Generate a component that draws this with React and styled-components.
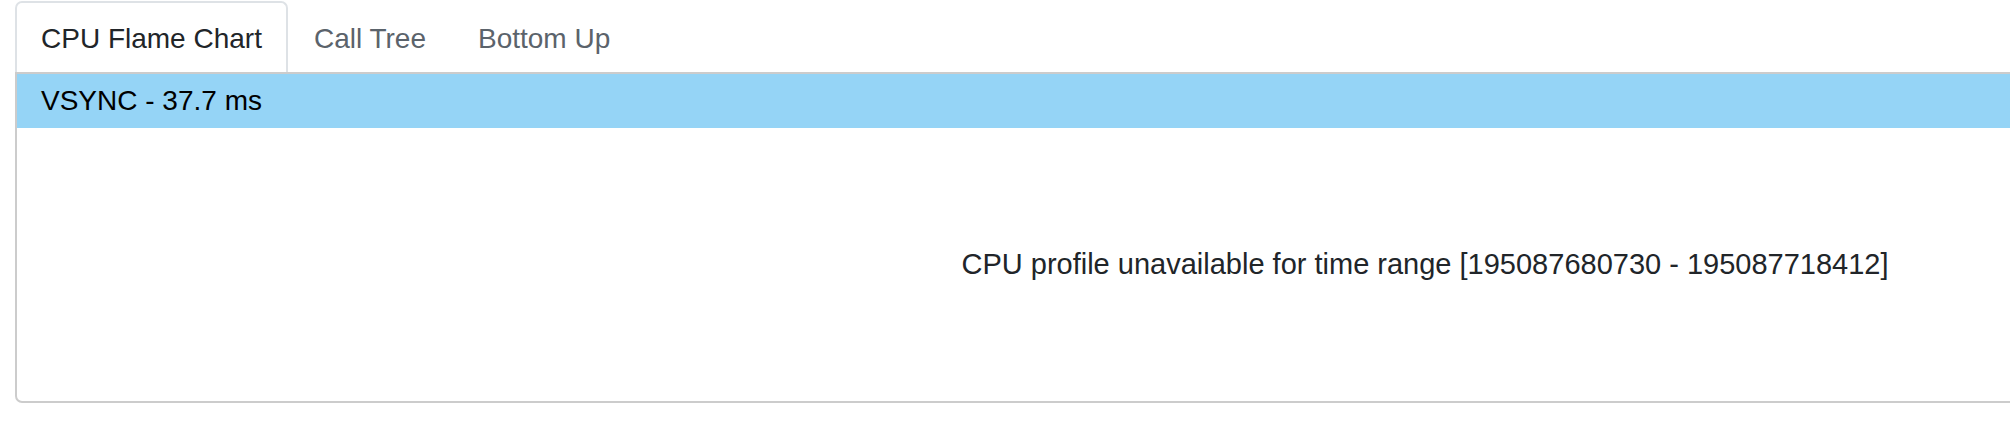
import React, { useState } from 'react'
import styled, { createGlobalStyle } from 'styled-components'

const GlobalStyle = createGlobalStyle`
    html, body {
        margin: 0;
        background: #ffffff;
        overflow: hidden;
    }
    body {
        font-family: "Liberation Sans", Arial, sans-serif;
        color: #212529;
    }
`

const Wrapper = styled.div`
    padding: 1px 0 0 15px;
    width: 2820px;
`

const TabList = styled.div`
    display: flex;
    flex-direction: row;
    align-items: flex-end;
`

const Tab = styled.button`
    font-family: inherit;
    font-size: 28px;
    line-height: 44px;
    padding: 14px 24px 11px;
    margin: 0;
    background: #ffffff;
    cursor: pointer;
    border: 2px solid ${p => (p.$active ? '#dee2e6' : 'transparent')};
    border-bottom: none;
    border-radius: 7px 7px 0 0;
    color: ${p => (p.$active ? '#212529' : '#5b636b')};
`

const Panel = styled.div`
    border: 2px solid #cccccc;
    border-radius: 0 0 7px 7px;
    display: flex;
    flex-direction: column;
    height: 327px;
`

const Band = styled.div`
    background: #95d4f6;
    color: #000000;
    font-size: 28px;
    height: 54px;
    display: flex;
    align-items: center;
    padding-left: 24px;
`

const Message = styled.div`
    flex: 1;
    display: flex;
    align-items: center;
    justify-content: center;
    font-size: 29px;
    color: #212529;
`

const tabs = ['CPU Flame Chart', 'Call Tree', 'Bottom Up']

const App = () => {
    const [active, setActive] = useState(0)
    return (
        <Wrapper>
            <GlobalStyle />
            <TabList>
                {tabs.map((t, i) => (
                    <Tab key={t} $active={i === active} onClick={() => setActive(i)}>
                        {t}
                    </Tab>
                ))}
            </TabList>
            <Panel>
                <Band>VSYNC - 37.7 ms</Band>
                <Message>
                    CPU profile unavailable for time range [195087680730 - 195087718412]
                </Message>
            </Panel>
        </Wrapper>
    )
}

export default App
